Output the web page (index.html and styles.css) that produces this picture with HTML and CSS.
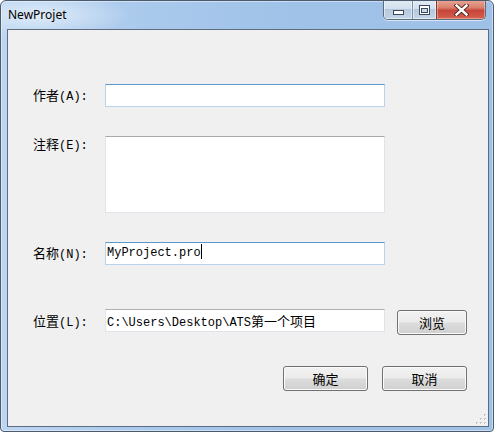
FILE: index.html
```html
<!DOCTYPE html>
<html lang="zh">
<head>
<meta charset="utf-8">
<title>NewProjet</title>
<link rel="stylesheet" href="styles.css">
</head>
<body>
<div class="window">
  <div class="titlebar">
    <div class="title">NewProjet</div>
    <div class="caption">
      <div class="cbtn cmin">
        <svg width="11" height="5" viewBox="0 0 11 5"><rect x="0.5" y="0.5" width="10" height="4" fill="#fff" stroke="#3b4a5c"/></svg>
      </div>
      <div class="cbtn cmax">
        <svg width="11" height="10" viewBox="0 0 11 10"><rect x="0.5" y="0.5" width="10" height="9" fill="#fff" stroke="#3b4a5c"/><rect x="2.5" y="3.5" width="6" height="4" fill="#c9d6e4" stroke="#3b4a5c"/></svg>
      </div>
      <div class="cbtn cclose">
        <svg width="15" height="12" viewBox="0 0 15 12"><path d="M2.5 1.5 L12.5 10.5 M12.5 1.5 L2.5 10.5" stroke="#4a1f1a" stroke-width="4.2" stroke-linecap="square"/><path d="M2.5 1.5 L12.5 10.5 M12.5 1.5 L2.5 10.5" stroke="#fff" stroke-width="2.4" stroke-linecap="square"/></svg>
      </div>
    </div>
  </div>
  <div class="client">
    <div class="row row-author">
      <label class="lbl"><span class="cjk">作者</span>(A):</label>
      <div class="field hot"></div>
    </div>
    <div class="row row-note">
      <label class="lbl lbl-top"><span class="cjk">注释</span>(E):</label>
      <div class="field area"></div>
    </div>
    <div class="row row-name">
      <label class="lbl"><span class="cjk">名称</span>(N):</label>
      <div class="field hot">MyProject.pro<span class="caret"></span></div>
    </div>
    <div class="row row-loc">
      <label class="lbl"><span class="cjk">位置</span>(L):</label>
      <div class="field">C:\Users\Desktop\ATS<span class="cjk">第一个项目</span></div>
      <button class="btn btn-browse">浏览</button>
    </div>
    <div class="row row-actions">
      <button class="btn btn-wide">确定</button>
      <button class="btn btn-wide">取消</button>
    </div>
    <svg class="grip" width="10" height="10" viewBox="0 0 10 10">
      <g fill="#c4c4c4">
        <rect x="8" y="0" width="2" height="2"/>
        <rect x="4" y="4" width="2" height="2"/><rect x="8" y="4" width="2" height="2"/>
        <rect x="0" y="8" width="2" height="2"/><rect x="4" y="8" width="2" height="2"/><rect x="8" y="8" width="2" height="2"/>
      </g>
      <g fill="#fff">
        <rect x="9" y="1" width="1" height="1"/>
        <rect x="5" y="5" width="1" height="1"/><rect x="9" y="5" width="1" height="1"/>
        <rect x="1" y="9" width="1" height="1"/><rect x="5" y="9" width="1" height="1"/><rect x="9" y="9" width="1" height="1"/>
      </g>
    </svg>
  </div>
</div>
</body>
</html>
```
FILE: styles.css
```css
* { box-sizing: border-box; }
html, body { margin: 0; padding: 0; background: #ffffff; }

.window {
  width: 494px;
  height: 432px;
  display: flex;
  flex-direction: column;
  border: 1px solid #4b5a6c;
  border-radius: 6px 6px 4px 4px;
  background:
    radial-gradient(ellipse 90px 22px at 40px 14px, rgba(255,255,255,0.55), rgba(255,255,255,0) 100%),
    linear-gradient(to right, #bcd6f1 0%, #a9c9ec 30%, #a0c2e8 60%, #9fc1e7 100%);
  box-shadow: inset 0 0 0 1px rgba(255,255,255,0.45);
  overflow: hidden;
}

.titlebar {
  height: 28px;
  display: flex;
  align-items: flex-start;
  justify-content: space-between;
  flex: none;
}

.title {
  font-family: "Noto Sans", "Open Sans", sans-serif;
  font-size: 12px;
  color: #000;
  padding: 6px 0 0 7px;
  line-height: 16px;
}

.caption {
  display: flex;
  margin: -1px 7px 0 0;
  height: 20px;
  border: 1px solid #5b6b7e;
  border-top: none;
  border-radius: 0 0 5px 5px;
  overflow: hidden;
  box-shadow: 0 1px 0 rgba(255,255,255,0.6);
}

.cbtn {
  height: 19px;
  display: flex;
  align-items: center;
  justify-content: center;
}
.cmin, .cmax {
  background: linear-gradient(#e3ecf6 0%, #d2dfed 45%, #b6c8dc 50%, #c4d5e7 100%);
  box-shadow: inset 0 0 0 1px rgba(255,255,255,0.5);
}
.cmin { width: 29px; border-right: 1px solid #7d8ea2; padding-top: 5px; }
.cmax { width: 24px; border-right: 1px solid #7d3a30; }
.cclose {
  width: 48px;
  background: linear-gradient(#e8a898 0%, #d9806c 40%, #c7443a 55%, #d5634f 100%);
  box-shadow: inset 0 0 0 1px rgba(255,220,210,0.45);
}

.client {
  position: relative;
  flex: 1;
  margin: 0 4px 4px 6px;
  border: 1px solid #5d6c80;
  background: #f0f0f0;
  padding: 54px 0 0 25px;
  display: flex;
  flex-direction: column;
  font-family: "Liberation Mono", "Noto Sans CJK SC", monospace;
  font-size: 12px;
  color: #000;
}

.row {
  display: flex;
  align-items: center;
}
.row-note { align-items: flex-start; margin-top: 29px; }
.row-name { margin-top: 29px; }
.row-loc { margin-top: 44px; align-items: flex-start; }
.row-actions { margin-top: 31px; padding-left: 250px; gap: 14px; }

.lbl {
  width: 72px;
  flex: none;
  white-space: nowrap;
  line-height: 16px;
}
.lbl-top { padding-top: 0; }
.row-loc .lbl { padding-top: 4px; }

.cjk {
  font-family: "Noto Sans CJK SC", sans-serif;
  font-size: 13px;
}

.field {
  width: 280px;
  height: 23px;
  flex: none;
  background: #fff;
  border: 1px solid #dfe3ea;
  border-top-color: #abadb3;
  padding: 0 0 0 1px;
  line-height: 21px;
  white-space: nowrap;
  overflow: hidden;
}
.field.hot {
  border-color: #b8d3ee;
  border-top-color: #5c98cc;
}
.field.area {
  height: 77px;
  border-color: #e0e3e9;
  border-top-color: #a6a9ae;
}

.caret {
  display: inline-block;
  width: 1px;
  height: 15px;
  background: #000;
  vertical-align: -3px;
}

.btn {
  font-family: "Noto Sans CJK SC", sans-serif;
  font-size: 13px;
  color: #000;
  height: 25px;
  padding: 0;
  border: 1px solid #707070;
  border-radius: 3px;
  background: linear-gradient(#f2f2f2 0%, #ebebeb 48%, #dddddd 52%, #cfcfcf 100%);
  box-shadow: inset 0 0 0 1px #fbfbfb;
  line-height: 21px;
}
.btn-browse { width: 70px; margin: 1px 0 0 12px; }
.btn-wide { width: 85px; }

.grip {
  position: absolute;
  right: 2px;
  bottom: 2px;
}
```
